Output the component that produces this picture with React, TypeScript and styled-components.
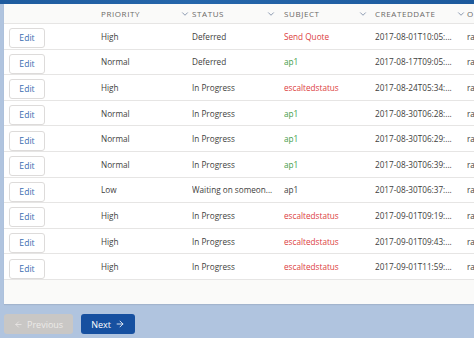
import styled, { createGlobalStyle } from 'styled-components';
import { ArrowLeft, ArrowRight, ChevronDown } from 'lucide-react';

const GlobalStyle = createGlobalStyle`
  html, body {
    margin: 0;
    padding: 0;
    background: #b0c4df;
  }
  body {
    font-family: 'Open Sans', 'Liberation Sans', sans-serif;
  }
`;

interface CaseRow {
  priority: string;
  status: string;
  subject: string;
  tone: 'error' | 'success' | 'plain';
  created: string;
}

const rows: CaseRow[] = [
  { priority: 'High', status: 'Deferred', subject: 'Send Quote', tone: 'error', created: '2017-08-01T10:05:...' },
  { priority: 'Normal', status: 'Deferred', subject: 'ap1', tone: 'success', created: '2017-08-17T09:05:...' },
  { priority: 'High', status: 'In Progress', subject: 'escaltedstatus', tone: 'error', created: '2017-08-24T05:34:...' },
  { priority: 'Normal', status: 'In Progress', subject: 'ap1', tone: 'success', created: '2017-08-30T06:28:...' },
  { priority: 'Normal', status: 'In Progress', subject: 'ap1', tone: 'success', created: '2017-08-30T06:29:...' },
  { priority: 'Normal', status: 'In Progress', subject: 'ap1', tone: 'success', created: '2017-08-30T06:39:...' },
  { priority: 'Low', status: 'Waiting on someon...', subject: 'ap1', tone: 'plain', created: '2017-08-30T06:37:...' },
  { priority: 'High', status: 'In Progress', subject: 'escaltedstatus', tone: 'error', created: '2017-09-01T09:19:...' },
  { priority: 'High', status: 'In Progress', subject: 'escaltedstatus', tone: 'error', created: '2017-09-01T09:43:...' },
  { priority: 'High', status: 'In Progress', subject: 'escaltedstatus', tone: 'error', created: '2017-09-01T11:59:...' },
];

const toneColor = {
  error: '#dc4040',
  success: '#3f9b4a',
  plain: '#3e3e3c',
};

const Page = styled.div`
  width: 474px;
  height: 338px;
  display: flex;
  flex-direction: column;
  overflow: hidden;
`;

const TopBand = styled.div`
  height: 4px;
  background: linear-gradient(90deg, #1f5c9f, #2566ab 40%, #1d5a9d);
`;

const Body = styled.div`
  padding-left: 4px;
`;

const Card = styled.div`
  height: 300px;
  background: #fafaf9;
  display: flex;
  flex-direction: column;
  overflow: hidden;
  box-shadow: 0 1px 1px rgba(0, 0, 0, 0.08);
`;

const Grid = styled.div`
  display: grid;
  grid-template-columns: 97px 91px 92px 91px 92px 1fr;
  align-items: center;
  border-bottom: 1px solid #e6e5e4;
`;

const HeaderRow = styled(Grid)`
  height: 19px;
  background: #fafaf9;
`;

const BodyRow = styled(Grid)`
  height: 24.6px;
  background: #ffffff;
`;

const HeaderCell = styled.div<{ $shift: number }>`
  display: flex;
  align-items: center;
  justify-content: space-between;
  font-size: 8px;
  letter-spacing: 0.6px;
  color: #6b6967;
  white-space: nowrap;
  svg {
    color: #54698d;
    flex: none;
    margin-right: ${(p) => p.$shift}px;
  }
`;

const Cell = styled.div<{ $color?: string }>`
  font-size: 8.2px;
  color: ${(p) => p.$color || '#3e3e3c'};
  white-space: nowrap;
  overflow: hidden;
`;

const EditButton = styled.button`
  margin-left: 5px;
  width: 36px;
  height: 20px;
  padding: 0;
  background: #ffffff;
  border: 1px solid #dddbda;
  border-radius: 3px;
  font-family: inherit;
  font-size: 8.6px;
  color: #3a6db0;
`;

const Footer = styled.div`
  display: flex;
  gap: 8px;
  padding: 10px 4px 0;
`;

const NavButton = styled.button<{ $primary?: boolean }>`
  display: flex;
  align-items: center;
  justify-content: center;
  gap: 4px;
  height: 20px;
  padding: 0 10px;
  border: none;
  border-radius: 3px;
  font-family: inherit;
  font-size: 9px;
  background: ${(p) => (p.$primary ? '#1650a0' : '#c9c7c5')};
  color: ${(p) => (p.$primary ? '#ffffff' : '#eceae8')};
`;

const headers = [
  { label: 'PRIORITY', shift: 2 },
  { label: 'STATUS', shift: 8 },
  { label: 'SUBJECT', shift: 7 },
  { label: 'CREATEDDATE', shift: 1 },
];

export default function App() {
  return (
    <Page>
      <GlobalStyle />
      <TopBand />
      <Body>
        <Card>
          <HeaderRow>
            <div />
            {headers.map((h) => (
              <HeaderCell key={h.label} $shift={h.shift}>
                {h.label}
                <ChevronDown size={10} strokeWidth={1.6} />
              </HeaderCell>
            ))}
            <HeaderCell $shift={0}>O</HeaderCell>
          </HeaderRow>
          {rows.map((r, i) => (
            <BodyRow key={i}>
              <div>
                <EditButton>Edit</EditButton>
              </div>
              <Cell>{r.priority}</Cell>
              <Cell>{r.status}</Cell>
              <Cell $color={toneColor[r.tone]}>{r.subject}</Cell>
              <Cell>{r.created}</Cell>
              <Cell>ra</Cell>
            </BodyRow>
          ))}
        </Card>
      </Body>
      <Footer>
        <NavButton>
          <ArrowLeft size={9} />
          Previous
        </NavButton>
        <NavButton $primary>
          Next
          <ArrowRight size={10} />
        </NavButton>
      </Footer>
    </Page>
  );
}
